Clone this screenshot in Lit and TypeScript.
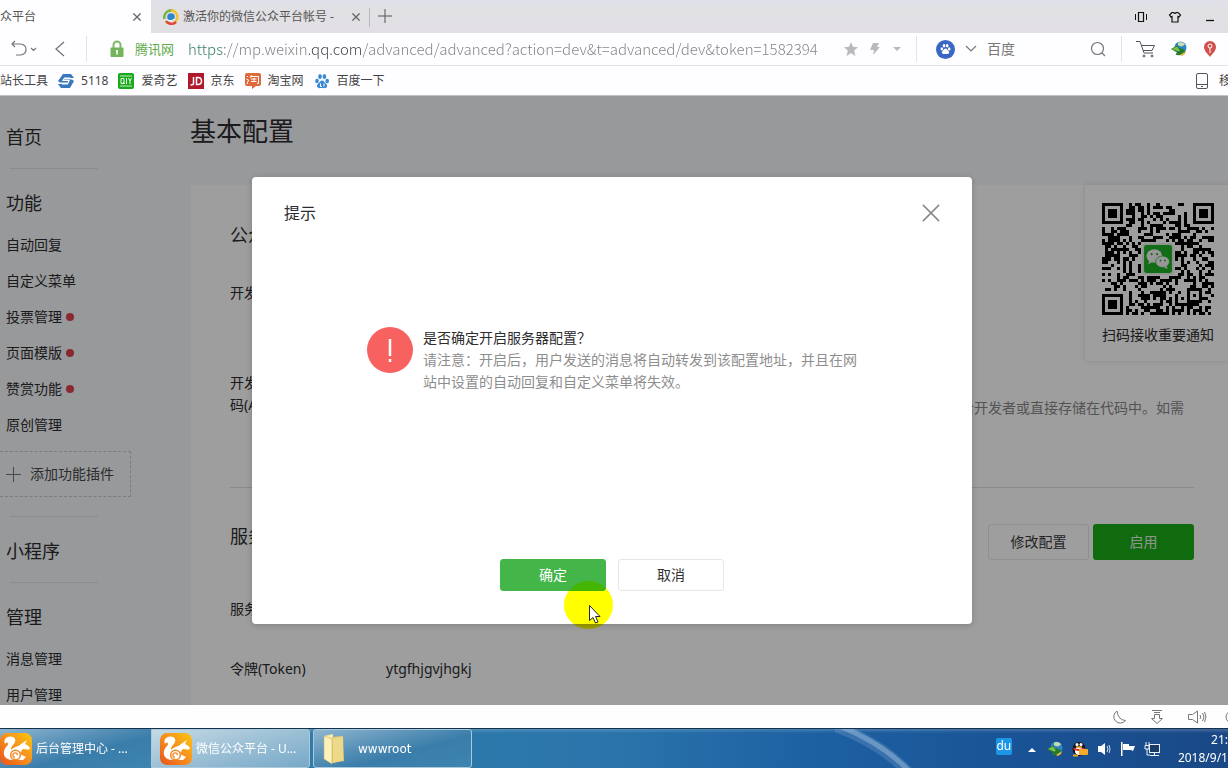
import { LitElement, html, css, svg } from "lit";
import { customElement } from "lit/decorators.js";
import { classMap } from "lit/directives/class-map.js";

const QR_SIZE = 37;

/** Builds the module path of the QR card: three finders, one alignment mark and the data field. */
function qrPath(): string {
  const finders = [[0, 0], [QR_SIZE - 7, 0], [0, QR_SIZE - 7]];
  const ring = (dx: number, dy: number, n: number) => {
    const edge = Math.min(dx, dy, n - 1 - dx, n - 1 - dy);
    return edge !== 1;
  };
  let seed = 20187;
  let d = "";
  for (let y = 0; y < QR_SIZE; y++) {
    for (let x = 0; x < QR_SIZE; x++) {
      seed = (seed * 1103515245 + 12345) % 2147483648;
      let on = ((seed >> 16) & 1) === 1;
      for (const [fx, fy] of finders) {
        const dx = x - fx;
        const dy = y - fy;
        if (dx >= -1 && dx <= 7 && dy >= -1 && dy <= 7) {
          on = dx >= 0 && dx < 7 && dy >= 0 && dy < 7 && ring(dx, dy, 7);
        }
      }
      const ax = x - 28;
      const ay = y - 28;
      if (ax >= 0 && ax < 5 && ay >= 0 && ay < 5) on = ring(ax, ay, 5);
      if (x > 12 && x < 24 && y > 12 && y < 24) on = false;
      if (on) d += `M${x} ${y}h1v1h-1z`;
    }
  }
  return d;
}

const wechat = svg`
  <rect x="13.6" y="13.6" width="9.8" height="9.8" rx="1" fill="#1fae25" stroke="#e4efe4" stroke-width=".6"/>
  <ellipse cx="17.3" cy="17.5" rx="2.6" ry="2.2" fill="#f4f4f4"/>
  <path d="M15.6 19l-.3 1.2 1.3-.7z" fill="#f4f4f4"/>
  <ellipse cx="20" cy="19.4" rx="2.3" ry="1.9" fill="#f4f4f4" stroke="#1fae25" stroke-width=".25"/>
  <path d="M21.3 20.8l.4 1-1.3-.6z" fill="#f4f4f4"/>
  <g fill="#1fae25"><circle cx="16.4" cy="16.9" r=".35"/><circle cx="18.2" cy="16.9" r=".35"/>
  <circle cx="19.3" cy="19" r=".3"/><circle cx="20.8" cy="19" r=".3"/></g>`;

const paw = svg`
  <ellipse cx="3" cy="8" rx="1.8" ry="2.3"/><ellipse cx="6" cy="3.6" rx="1.8" ry="2.5"/>
  <ellipse cx="10.4" cy="3.6" rx="1.8" ry="2.5"/><ellipse cx="13.2" cy="8" rx="1.8" ry="2.3"/>
  <path d="M8.1 7.4c1.8 0 2.3 1.7 3.5 2.8 1.6 1.4 2 2.6 1.3 3.9-.9 1.6-2.8.9-4.8.9s-3.9.7-4.8-.9c-.7-1.3-.3-2.5 1.3-3.9 1.2-1.1 1.7-2.8 3.5-2.8z"/>`;

const globe = html`<svg width="16" height="16" viewBox="0 0 16 16">
  <circle cx="9.5" cy="6.5" r="6" fill="#2c86c4"/>
  <path d="M7 1.5c3-1.5 6 0 7 2l-3 2-4-1z" fill="#c9d9b0"/>
  <path d="M0 8l7-4 .5 3c3 0 5 1 7 3.500-2 3.500-7 4.500-10 3l1.500-2z" fill="#257a2c"/>
  <path d="M1 8l5-2.600 3 4-2 1z" fill="#7cc04b"/>
  <path d="M9 14l6-4-1 3-3 2z" fill="#e2b93c"/></svg>`;

const squirrel = html`<svg width="32" height="32" viewBox="0 0 32 32">
  <defs><linearGradient id="uc" x1="0" y1="1" x2="1" y2="0">
    <stop offset="0" stop-color="#e9541b"/><stop offset=".55" stop-color="#f7941e"/><stop offset="1" stop-color="#fdc60b"/>
  </linearGradient></defs>
  <rect width="32" height="32" rx="7" fill="url(#uc)"/>
  <path d="M5 11C2 4 12 1 15 6c2 4-5 7-4 11 3-4 6-2 10-6l6-4-2 4c3 1 5 3 5 5-2 1-5 0-7 0-2 2-3 4-3 5l6 3-3 3H13c-6 0-10-3-9-9 1-4 4-5 4-7s-2-2-3 0z" fill="#fff"/>
  <circle cx="15.5" cy="22" r="4.8" fill="#fff" stroke="#f08a24" stroke-width="1.5"/>
  <path d="M15 24.500a2.300 2.300 0 1 1 2.500-2.300" fill="none" stroke="#f08a24" stroke-width="1.3"/></svg>`;

const folder = html`<svg width="24" height="32" viewBox="0 0 24 32">
  <path d="M2 3l9-2v27l-9-3z" fill="#f7e9a8"/><path d="M10 4l11-1 1 25-12 2z" fill="#e6cc70"/>
  <path d="M2 3l8 3v25l-8-5z" fill="#fbf1bd" stroke="#cfb45b" stroke-width=".6"/>
  <path d="M11 6l6-2 4 1v22l-10 3z" fill="#edd98a"/></svg>`;

const cross = (size: number, width = 1) => html`<svg width=${size} height=${size} viewBox="0 0 10 10">
  <path d="M.5.5l9 9M9.500.500l-9 9" fill="none" stroke="currentColor" stroke-width=${(width * 10) / size}/></svg>`;

@customElement("browser-chrome")
class BrowserChrome extends LitElement {
  static styles = css`
    :host { display: block; color: #444; font-size: 12px; line-height: 20px; }
    svg { display: block; flex: none; }
    button { border: 0; padding: 0; margin: 0; background: none; color: inherit; font: inherit; display: block; flex: none; }
    a { color: inherit; text-decoration: none; }
    .tabs { display: flex; height: 33px; background: linear-gradient(#dfe0ea, #e1e0e3 12px, #e1dfe5); overflow: hidden; }
    .tab { display: flex; align-items: center; justify-content: space-between; box-sizing: border-box; color: #555; white-space: nowrap; }
    .tab.active { width: 151px; padding-right: 10px; background: #fefdff; }
    .tab.other { width: 218px; padding: 0 9px 0 12px; }
    .tab .label { display: flex; gap: 4px; align-items: center; }
    .tab button { color: #666; }
    .rule { width: 1px; background: #bbb9c0; margin: 8px 0 6px; }
    .plus { margin: 9px 8px; height: 14px; color: #555; }
    .window { display: flex; align-items: center; gap: 20px; margin-left: auto; padding-right: 12px; color: #111; }
    .address { display: flex; align-items: center; height: 32px; background: #fefdff; border-bottom: 1px solid #e3e1e6; }
    .nav { display: flex; align-items: center; gap: 15px; padding: 0 19px 0 10px; color: #777; }
    .sep { width: 1px; height: 26px; background: #e4e2e7; flex: none; }
    .site { display: flex; align-items: center; gap: 10px; padding: 0 14px 0 22px; color: #62ab4a; font-size: 13px; }
    .url { flex: 1; min-width: 0; height: 24px; border: 0; padding: 0; outline: 0; font: 300 15px/24px "Noto Sans CJK SC", sans-serif; color: transparent;
      background: linear-gradient(90deg, #2e7a5c 37px, #808080 37px, #808080 121px, #444 121px, #444 173px, #808080 173px);
      background-clip: text; -webkit-background-clip: text; }
    .marks { display: flex; align-items: center; gap: 12px; padding: 0 14px 0 4px; color: #b9b9bb; }
    .search { display: flex; align-items: center; box-sizing: border-box; width: 204px; padding: 0 15px 0 19px; gap: 10px; color: #777; }
    .search input { flex: 1; min-width: 0; border: 0; padding: 0; outline: 0; background: none; font: inherit; font-size: 14px; }
    .search input::placeholder { color: #777; opacity: 1; }
    .tools { display: flex; align-items: center; gap: 15px; padding: 0 10px 0 13px; color: #555; }
    .bookmarks { display: flex; align-items: center; height: 29px; background: #fefdff; border-bottom: 1px solid #c4c2c8; overflow: hidden; gap: 10px; white-space: nowrap; }
    .bookmarks a { display: flex; align-items: center; gap: 7px; }
    .bookmarks .mobile { margin-left: auto; gap: 11px; width: 32px; }
  `;

  private bookmarks = [
    { name: "站长工具", icon: null },
    { name: "5118", icon: svg`<path d="M5 1h8l3 4H7L6 6.500h8l2 1.500-4 7H3l-3-4h9l1-1.500H2L0 8z" fill="#3a78bd"/><path d="M12 5H6.500L5 7.500h6L9.500 11H4" fill="none" stroke="#fff" stroke-width="1.200"/>` },
    { name: "爱奇艺", icon: svg`<rect width="16" height="16" rx="2" fill="#19a81e"/><path d="M2 3h12M2 13h12" stroke="#bff0b8"/><path d="M3 5.500h3v5H3zM5 9l2 2M8.500 5v6M10.500 5l1.500 3 1.500-3M12 8v3" fill="none" stroke="#e9ffe6"/>` },
    { name: "京东", icon: svg`<rect width="16" height="16" fill="#b0182e"/><path d="M5.500 4v6.500q0 1.500-3 1.500M8.500 4.500v7h1.500q3.500 0 3.500-3.500T10 4.500z" fill="none" stroke="#fff" stroke-width="1.500"/>` },
    { name: "淘宝网", icon: svg`<path d="M2 0h12q2 0 2 2v9q0 2-2 2h-3l-4 3v-3H2q-2 0-2-2V2q0-2 2-2z" fill="#e0693c"/><path d="M2 3l1 1M1.500 6l2 1-1.500 4M6.500 2L5 5M6 3.500h7.500v7h-1.500M6 6h5.500M6 8.500h5.500M9 5v4" fill="none" stroke="#fff"/>` },
    { name: "百度一下", icon: svg`<g fill="#3a8ad8">${paw}</g><path d="M6.500 10.500v3h1.500M10 10.500v3" stroke="#fff" fill="none"/>` },
  ];

  render() {
    return html`
      <div class="tabs" role="tablist">
        <div class="tab active" role="tab" aria-selected="true">
          <span>众平台</span><button aria-label="关闭标签">${cross(8, 1.3)}</button>
        </div>
        <div class="tab other" role="tab" aria-selected="false">
          <span class="label">
            <svg width="16" height="16" viewBox="0 0 16 16" fill="none">
              <path d="M1.500 10A7 7 0 0 1 10 1.500" stroke="#7cb342" stroke-width="2.500"/>
              <path d="M8 1.500A6.500 6.500 0 0 1 12 13" stroke="#f2c230" stroke-width="2.500"/>
              <path d="M3 12a6.500 6.500 0 0 0 10 1" stroke="#e04a2f" stroke-width="2.500"/>
              <circle cx="8" cy="8" r="3.800" fill="#2f86cf"/><path d="M4 11q4 2 8-1" stroke="#fff"/>
            </svg>
            <span>激活你的微信公众平台帐号 -</span>
          </span>
          <button aria-label="关闭标签">${cross(8, 1.3)}</button>
        </div>
        <span class="rule"></span>
        <button class="plus" aria-label="新标签"><svg width="14" height="14"><path d="M7 0v14M0 7h14" stroke="currentColor"/></svg></button>
        <div class="window">
          <button aria-label="窗口"><svg width="14" height="14" fill="none" stroke="currentColor"><path d="M4.500 2.500h5v9h-5z" stroke-width="1.200"/><path d="M1.500 4v6M12.500 4v6"/></svg></button>
          <button aria-label="皮肤"><svg width="14" height="14" fill="none" stroke="currentColor" stroke-width="1.200"><path d="M4 2.500L1.500 5l1.500 2 1-.5v5.500h6V6.500l1 .5 1.500-2L10 2.500H8.500Q7 4 5.500 2.500z"/></svg></button>
          <button aria-label="最小化"><svg width="14" height="14"><path d="M4 10.500h8" stroke="currentColor" stroke-width="1.300"/></svg></button>
        </div>
      </div>
      <div class="address">
        <div class="nav">
          <button aria-label="恢复"><svg width="28" height="18" fill="none" stroke="currentColor" stroke-width="1.200"><path d="M5 1L2 4l3 3M2 4h9q5 1 5 5.500T11 15H6M21 8l2.500 2.500L26 8"/></svg></button>
          <button aria-label="后退"><svg width="14" height="16" fill="none" stroke="currentColor" stroke-width="1.300"><path d="M11 1L3 8l8 7"/></svg></button>
        </div>
        <span class="sep"></span>
        <div class="site">
          <svg width="16" height="18" viewBox="0 0 16 18"><path d="M4.500 8V5a3.500 3.500 0 0 1 7 0v3" fill="none" stroke="#80b968" stroke-width="2"/><rect x="1.500" y="7.500" width="13" height="9.500" rx="1" fill="#74b45b"/><path d="M8 10v4.500M7 11h2" stroke="#fff" stroke-width="1.500"/></svg>
          <span>腾讯网</span>
        </div>
        <input class="url" aria-label="网址" .value=${"https://mp.weixin.qq.com/advanced/advanced?action=dev&t=advanced/dev&token=1582394"}>
        <div class="marks">
          <svg width="14" height="14" viewBox="0 0 14 14" fill="currentColor"><path d="M7 0l2 4.800 5 .4-3.800 3.300L11.400 14 7 11l-4.400 3 1.200-5.500L0 5.200l5-.4z"/></svg>
          <svg width="10" height="14" viewBox="0 0 10 14" fill="currentColor"><path d="M3 1h6L7 5h3L3 13l1-5H0z"/></svg>
          <svg width="10" height="6" fill="currentColor"><path d="M1 1h8L5 5z"/></svg>
        </div>
        <span class="sep"></span>
        <div class="search">
          <svg width="19" height="19" viewBox="0 0 19 19"><circle cx="9.500" cy="9.500" r="9.500" fill="#3a66c4"/><g fill="#fff" transform="translate(3.700 3.200) scale(.72)">${paw}</g></svg>
          <svg width="12" height="8" fill="none" stroke="currentColor" stroke-width="1.200"><path d="M1 1l5 5 5-5"/></svg>
          <input aria-label="搜索" placeholder="百度">
          <button aria-label="搜索"><svg width="16" height="16" fill="none" stroke="currentColor" stroke-width="1.200"><circle cx="7.500" cy="7.500" r="6"/><path d="M12 12l3 3"/></svg></button>
        </div>
        <span class="sep"></span>
        <div class="tools">
          <button aria-label="购物"><svg width="21" height="18" fill="none" stroke="currentColor"><path d="M1 1.500h4l4 11.500h9M6 5.500h13.500L17 10.500H8"/><circle cx="9" cy="16" r="1"/><circle cx="17" cy="16" r="1"/></svg></button>
          <button aria-label="下载器">${globe}</button>
          <button aria-label="位置"><svg width="16" height="16"><path d="M8 0a6 6 0 0 1 6 6c0 4-4 7-6 10C6 13 2 10 2 6a6 6 0 0 1 6-6z" fill="#d0504a"/><circle cx="8" cy="5" r="2" fill="none" stroke="#fff"/><path d="M8 7v5" stroke="#fff"/></svg></button>
        </div>
      </div>
      <nav class="bookmarks">
        ${this.bookmarks.map((b) => html`<a href="#">${b.icon ? html`<svg width="16" height="16" viewBox="0 0 16 16">${b.icon}</svg>` : null}<span>${b.name}</span></a>`)}
        <a class="mobile" href="#"><svg width="12" height="16" fill="none" stroke="#555"><rect x=".5" y=".5" width="11" height="15" rx="1.500"/><path d="M.500 11.500h11M5 13.500h2"/></svg><span>移</span></a>
      </nav>`;
  }
}

@customElement("admin-page")
class AdminPage extends LitElement {
  static styles = css`
    :host { display: flex; flex: 1; min-height: 0; overflow: hidden; position: relative; background: #f6f7fa; color: #2c2c2e; font-size: 14px; line-height: 22px; }
    h1, h2, p, dl, dd, dt, ul { margin: 0; padding: 0; font-weight: inherit; }
    ul { list-style: none; }
    a { color: inherit; text-decoration: none; }
    svg { display: block; flex: none; }
    button { font: inherit; padding: 0; border-radius: 3px; box-sizing: border-box; }
    .side { width: 190px; flex: none; padding-top: 17px; }
    .group { padding-bottom: 7px; }
    .group + .group::before { content: ""; display: block; width: 88px; height: 1px; margin: 0 0 10px 10px; background: #e2e3e6; }
    .group h2 { padding-left: 6px; font-size: 18px; line-height: 48px; }
    .group li a { display: flex; align-items: center; gap: 4px; padding-left: 6px; line-height: 36px; }
    .dot { width: 8px; height: 8px; border-radius: 50%; background: #dc4150; }
    .add { display: flex; align-items: center; gap: 9px; width: 131px; height: 46px; margin: 8px 0 12px; padding-left: 6px; border: 1px dashed #c8c8cc; border-left: 0; border-radius: 0; background: none; color: #48484a; }
    .main { flex: 1; min-width: 0; padding-top: 17px; }
    .main h1 { font-size: 26px; line-height: 36px; }
    .card { position: relative; margin-top: 35px; padding: 38px 34px 38px 39px; min-height: 520px; background: #fff; border: 1px solid #f8f8fa; border-right: 0; }
    .card h2 { font-size: 18px; line-height: 24px; }
    .row { display: flex; gap: 26px; margin-top: 38px; }
    .row dt { width: 130px; flex: none; }
    .row dd { flex: 1; }
    .keep { white-space: nowrap; }
    .info { padding-bottom: 68px; border-bottom: 1px solid #dedfe2; }
    .info .row { margin-top: 35px; }
    .info .row + .row { margin-top: 68px; }
    .hint { padding: 25px 10px 0 0; text-align: right; color: #87878a; }
    .head { display: flex; gap: 4px; padding-top: 36px; }
    .head h2 { flex: 1; }
    .head button { height: 36px; width: 101px; border: 1px solid #e8e8eb; background: #fff; color: #3a3a3c; }
    .head .go { border: 0; background: #1aad19; color: #e4f2e4; }
    .qr { position: absolute; top: 0; right: 0; padding: 18px 14px 15px 17px; background: #fff; box-shadow: 0 0 5px #dcdce0; }
    .qr p { margin-top: 9px; }
    .backdrop { position: absolute; inset: 0; display: grid; place-items: center; padding-right: 4px; background: rgba(0, 0, 0, 0.38); }
    .modal { display: flex; flex-direction: column; width: 720px; background: #fff; border-radius: 4px; box-shadow: 0 1px 6px rgba(0, 0, 0, 0.2); }
    .title { display: flex; align-items: center; justify-content: space-between; padding: 0 32px; height: 72px; font-size: 16px; }
    .title button { border: 0; background: none; color: #888; }
    .message { display: flex; gap: 10px; padding: 78px 115px 166px; }
    .message .note { color: #8e8e8e; }
    .actions { display: flex; justify-content: center; gap: 12px; padding-bottom: 33px; }
    .actions button { width: 106px; height: 32px; border: 1px solid #e6e6e8; background: #fff; color: #333; }
    .actions .ok { border-color: #44b549; background: #44b549; color: #fff; }
  `;

  private features = [
    { name: "自动回复", fresh: false },
    { name: "自定义菜单", fresh: false },
    { name: "投票管理", fresh: true },
    { name: "页面模版", fresh: true },
    { name: "赞赏功能", fresh: true },
    { name: "原创管理", fresh: false },
  ];

  render() {
    return html`
      <nav class="side">
        <section class="group"><h2>首页</h2></section>
        <section class="group">
          <h2>功能</h2>
          <ul>${this.features.map((f) => html`<li><a href="#">${f.name}${f.fresh ? html`<i class="dot"></i>` : null}</a></li>`)}</ul>
          <button class="add"><svg width="15" height="15"><path d="M7.500 0v15M0 7.500h15" stroke="#77777a"/></svg>添加功能插件</button>
        </section>
        <section class="group"><h2>小程序</h2></section>
        <section class="group">
          <h2>管理</h2>
          <ul>${["消息管理", "用户管理"].map((n) => html`<li><a href="#">${n}</a></li>`)}</ul>
        </section>
      </nav>
      <main class="main">
        <h1>基本配置</h1>
        <div class="card">
          <section class="info">
            <h2>公众号</h2>
            <dl>
              <div class="row"><dt>开发者ID</dt></div>
              <div class="row"><dt>开发者密<span class="keep">码(AppSecret)</span></dt><dd class="hint">给开发者或直接存储在代码中。如需</dd></div>
            </dl>
          </section>
          <section>
            <div class="head"><h2>服务器</h2><button>修改配置</button><button class="go">启用</button></div>
            <dl>
              <div class="row"><dt>服务器</dt></div>
              <div class="row"><dt>令牌(Token)</dt><dd>ytgfhjgvjhgkj</dd></div>
            </dl>
          </section>
          <aside class="qr">
            <svg width="112" height="112" viewBox="0 0 37 37" shape-rendering="geometricPrecision"><path d=${qrPath()} fill="#000" shape-rendering="crispEdges"/>${wechat}</svg>
            <p>扫码接收重要通知</p>
          </aside>
        </div>
      </main>
      <div class="backdrop">
        <div class="modal" role="dialog" aria-modal="true" aria-labelledby="title">
          <div class="title"><span id="title">提示</span><button aria-label="关闭">${cross(18, 1.5)}</button></div>
          <div class="message">
            <svg width="46" height="46"><circle cx="23" cy="23" r="23" fill="#f76260"/><path d="M23 12v17M23 32v3" stroke="#fff" stroke-width="2.500"/></svg>
            <div><p>是否确定开启服务器配置？</p><p class="note">请注意：开启后，用户发送的消息将自动转发到该配置地址，并且在网站中设置的自动回复和自定义菜单将失效。</p></div>
          </div>
          <div class="actions"><button class="ok">确定</button><button>取消</button></div>
        </div>
      </div>`;
  }
}

@customElement("desktop-bar")
class DesktopBar extends LitElement {
  static styles = css`
    :host { display: block; font-size: 12px; line-height: 18px; color: #fff; }
    svg { display: block; flex: none; }
    button { font: inherit; color: inherit; border: 0; padding: 0; background: none; }
    .status { display: flex; align-items: center; justify-content: flex-end; gap: 22px; height: 23px; overflow: hidden; background: #fefefe; color: #777; }
    .status .edge { width: 3px; overflow: hidden; margin-left: -4px; }
    .bar { position: relative; display: flex; align-items: stretch; height: 39px; border-top: 1px solid #14324c; overflow: hidden; background: linear-gradient(#ffffff30, transparent 4px), linear-gradient(90deg, #2f7cab 30%, #2a74ab 50%, #1d61a2 66%, #1a5496 82%, #1a4886); }
    .streak { position: absolute; left: 68%; top: 0; }
    .task { display: flex; align-items: center; gap: 4px; width: 159px; box-sizing: border-box; margin-right: 3px; border: 1px solid #a9cadd; border-radius: 3px; padding-left: 8px; white-space: nowrap; background: linear-gradient(165deg, #8fb6d0, #5b93b9 35%, #3a7daa 60%, #3e85b1); }
    .task.first { width: 151px; margin: 0; border: 0; border-radius: 0; padding: 0; }
    .task.current { border-radius: 0 3px 3px 0; background: linear-gradient(165deg, #c5dae6, #9cc0d5 50%, #77a9c8); }
    .task.folder { gap: 12px; font-family: "DejaVu Sans", sans-serif; }
    .tray { position: relative; display: flex; align-items: center; gap: 8px; margin-left: auto; }
    .du { width: 16px; height: 17px; margin: 0 5px 4px 0; background: #1e96e8; border-radius: 2px; text-align: center; line-height: 16px; }
    .clock { margin-left: 9px; text-align: right; }
  `;

  private tasks = [
    { name: "后台管理中心 - ...", icon: squirrel, kind: "first" },
    { name: "微信公众平台 - U...", icon: squirrel, kind: "current" },
    { name: "wwwroot", icon: folder, kind: "folder" },
  ];

  render() {
    return html`
      <div class="status">
        <svg width="16" height="16" fill="none" stroke="currentColor"><path d="M6 2a6.500 6.500 0 1 0 8.500 9.500Q7 11 6 2z"/></svg>
        <svg width="16" height="16" fill="none" stroke="currentColor"><path d="M3 1.500h10M5 3.500h6M5.500 5.500h5v4h3L8 14.500 2.500 9.500h3z"/></svg>
        <svg width="20" height="16" fill="none" stroke="currentColor"><path d="M1.500 5.500h4l5-3.500v12l-5-3.500h-4zM13 6q1.500 2 0 4M15.500 4q3 4 0 8M17.500 3q3 5 0 10"/></svg>
        <svg class="edge" width="3" height="16" fill="none" stroke="currentColor"><circle cx="7" cy="8" r="6"/></svg>
      </div>
      <div class="bar">
        <svg class="streak" width="90" height="39"><path d="M-4 -4Q44 12 74 44" fill="none" stroke="#8fb0d6" stroke-opacity=".25" stroke-width="11"/><path d="M2 -4Q48 14 76 44" fill="none" stroke="#a5c3e0" stroke-opacity=".45" stroke-width="5"/></svg>
        ${this.tasks.map((t) => html`<button class=${classMap({ task: true, [t.kind]: true })}>${t.icon}<span>${t.name}</span></button>`)}
        <div class="tray">
          <span class="du">du</span>
          <svg width="14" height="16" fill="#fff"><path d="M3 11l4-4 4 4z"/></svg>
          ${globe}
          <svg width="17" height="17"><ellipse cx="8" cy="9" rx="6.500" ry="7" fill="#16181c"/><ellipse cx="8" cy="11" rx="4" ry="4" fill="#fff"/><circle cx="6" cy="4.500" r="1.500" fill="#fff"/><circle cx="10" cy="4.500" r="1.500" fill="#fff"/><path d="M5 7h6" stroke="#f2a725" stroke-width="1.500"/><path d="M2.500 8.500q5 3 11 0" stroke="#d8322c" stroke-width="2" fill="none"/><path d="M2 15.500h5" stroke="#f2a725" stroke-width="2"/><rect x="8" y="9" width="9" height="6" rx="1" fill="#f9ab2e"/></svg>
          <svg width="16" height="16" fill="#fff"><path d="M2 5h3l4-3v12l-4-3H2z"/><path d="M11 5q2 3 0 6M13 4q2 4 0 8" fill="none" stroke="#cfe0ef"/></svg>
          <svg width="16" height="16" fill="#fff"><path d="M1 1h1.500v14H1zM3 3h6v2h6l-2 5-2-1H3z"/></svg>
          <svg width="17" height="16" fill="none" stroke="#e8eff6"><rect x="5.500" y="3.500" width="10" height="8" fill="#1b3c66"/><path d="M6 14.500h9M10.500 12v2M2 1v3M5 1v3M1 4.500h4V8H1zM3 8v6h3"/></svg>
          <div class="clock">21:<br>2018/9/1</div>
        </div>
      </div>`;
  }
}

@customElement("app-root")
class AppRoot extends LitElement {
  static styles = css`
    :host { position: relative; display: flex; flex-direction: column; height: 100vh; overflow: hidden; font-family: "Noto Sans", "Noto Sans CJK SC", sans-serif; }
    .spot { position: absolute; left: calc(50% - 50px); top: calc(50% + 197px); width: 49px; height: 48px; border-radius: 50%; background: #ffff00; mix-blend-mode: multiply; }
    .pointer { position: absolute; left: calc(50% - 26px); top: calc(50% + 220px); }
  `;

  render() {
    return html`
      <browser-chrome></browser-chrome>
      <admin-page></admin-page>
      <desktop-bar></desktop-bar>
      <span class="spot"></span>
      <svg class="pointer" width="14" height="20"><path d="M1.500 1.500v15l3.500-3 2.500 5.500 2.500-1-2.500-5.500h4.500z" fill="#fff" stroke="#222"/></svg>`;
  }
}
